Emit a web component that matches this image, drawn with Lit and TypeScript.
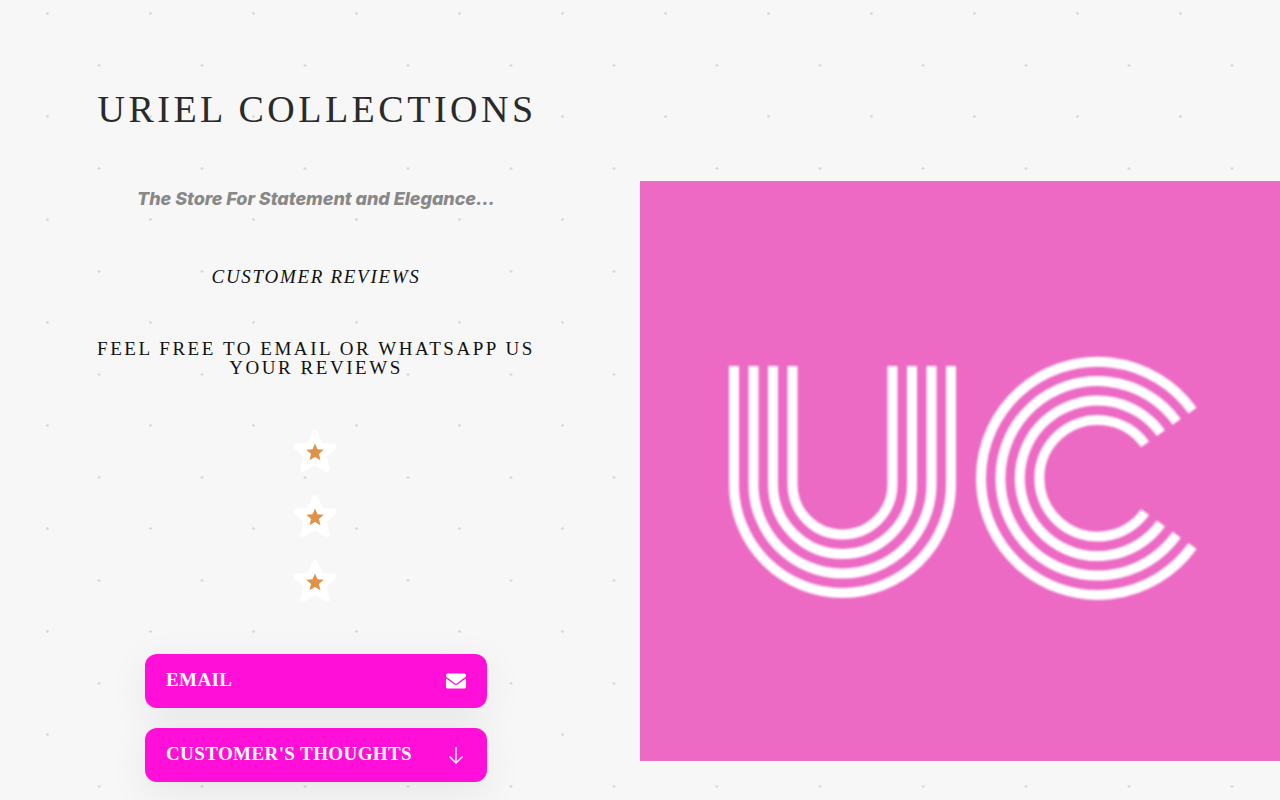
import { LitElement, css, html, svg } from "lit";
import { customElement } from "lit/decorators.js";

const U_RADII = [108.5, 89, 69.5, 50];
const C_RADII = [116.6, 97.2, 77.8, 58.3];
const C_ANGLE = (35.5 * Math.PI) / 180;

const ENVELOPE =
  "M502.3 190.8c3.9-3.1 9.7-.2 9.7 4.7V400c0 26.5-21.5 48-48 48H48c-26.5 0-48-21.5-48-48V195.6c0-5 5.7-7.8 9.7-4.7 22.4 17.4 52.1 39.5 154.1 113.6 21.1 15.4 56.7 47.8 92.2 47.6 35.7.3 72-32.8 92.3-47.6 102-74.1 131.6-96.3 154-113.7zM256 320c23.2.4 56.6-29.2 73.4-41.4 132.7-96.3 142.8-104.7 173.4-128.7 5.8-4.5 9.2-11.5 9.2-18.9v-19c0-26.5-21.5-48-48-48H48C21.5 64 0 85.5 0 112v19c0 7.4 3.4 14.3 9.2 18.9 30.6 23.9 40.7 32.4 173.4 128.7 16.8 12.2 50.2 41.8 73.4 41.4z";

const STAR =
  "M50 6 L63 36 L96 39 L71 61 L79 94 L50 77 L21 94 L29 61 L4 39 L37 36 Z";

@customElement("app-root")
export class AppRoot extends LitElement {
  static styles = css`
    :host {
      display: block;
      height: 800px;
      overflow: hidden;
      background-color: #f7f7f7;
      background-image: radial-gradient(circle, #d2d2d2 0.7px, transparent 1.7px),
        radial-gradient(circle, #d2d2d2 0.7px, transparent 1.7px);
      background-size: 103px 103px;
      background-position: -4px -38px, 47.5px 14px;
    }
    .page {
      display: grid;
      grid-template-columns: 640px 640px;
      height: 942px;
    }
    .left {
      display: flex;
      flex-direction: column;
      align-items: center;
      padding-right: 8px;
      text-align: center;
    }
    h1 {
      margin: 87px 0 0 2px;
      font: 400 38px/44px "Liberation Serif", serif;
      letter-spacing: 3.5px;
      color: #2a2a2a;
      white-space: nowrap;
    }
    .tagline {
      margin: 56px 0 0;
      font: italic 800 18px/24px Inter, sans-serif;
      letter-spacing: -0.05px;
      color: #888888;
    }
    .reviews {
      margin: 54px 0 0;
      font: italic 400 19px/24px "Liberation Serif", serif;
      letter-spacing: 1.7px;
      color: #111111;
    }
    .feel {
      margin: 50px 0 0;
      width: 450px;
      font: 400 19px/19px "Liberation Serif", serif;
      letter-spacing: 2.55px;
      color: #111111;
    }
    .stars {
      display: flex;
      flex-direction: column;
      gap: 23px;
      margin: 53px 2px 0 0;
    }
    .star {
      display: block;
      width: 42px;
      height: 42px;
    }
    .buttons {
      display: flex;
      flex-direction: column;
      gap: 20px;
      width: 342px;
      margin-top: 52px;
    }
    .btn {
      display: flex;
      align-items: center;
      justify-content: space-between;
      height: 54px;
      box-sizing: border-box;
      padding: 0 21px 0 22px;
      border-radius: 12px;
      background: #ff0fd8;
      box-shadow: 0 10px 40px rgba(0, 0, 0, 0.07);
      color: #ffffff;
      font: 700 19px/24px "Liberation Serif", serif;
      letter-spacing: 0.4px;
    }
    .btn span {
      margin-top: -2px;
      margin-left: -1px;
    }
    .btn svg {
      display: block;
    }
    .right {
      display: flex;
      align-items: center;
    }
    .logo {
      display: block;
      width: 640px;
      height: 580px;
      background: #ec6ac4;
    }
    .logo g {
      filter: blur(1px);
    }
  `;

  private star() {
    return html`<svg class="star" viewBox="0 0 100 100">
      <path d=${STAR} fill="#ffffff" stroke="#ffffff" stroke-width="12" stroke-linejoin="round"></path>
      <g transform="translate(50 52) scale(0.45) translate(-50 -50)">
        <path d=${STAR} fill="#e0924a"></path>
      </g>
    </svg>`;
  }

  // logo is in page coordinates minus the image's origin (640,181)
  private logo() {
    const ux = 202.5;
    const uy = 303.5;
    const cx = 457.6;
    const cy = 297.3;
    const us = U_RADII.map(
      (r) =>
        svg`<path d="M${ux - r} 185 V${uy} A${r} ${r} 0 0 0 ${ux + r} ${uy} V185"></path>`
    );
    const cs = C_RADII.map((r) => {
      const dx = r * Math.cos(C_ANGLE);
      const dy = r * Math.sin(C_ANGLE);
      return svg`<path d="M${cx + dx} ${cy - dy} A${r} ${r} 0 1 0 ${cx + dx} ${cy + dy}"></path>`;
    });
    return html`<svg class="logo" viewBox="0 0 640 580">
      <g fill="none" stroke="#ffffff" stroke-width="10">${us}${cs}</g>
    </svg>`;
  }

  render() {
    return html`<div class="page">
      <div class="left">
        <h1>URIEL COLLECTIONS</h1>
        <p class="tagline">The Store For Statement and Elegance...</p>
        <p class="reviews">CUSTOMER REVIEWS</p>
        <p class="feel">FEEL FREE TO EMAIL OR WHATSAPP US YOUR REVIEWS</p>
        <div class="stars">${this.star()}${this.star()}${this.star()}</div>
        <div class="buttons">
          <div class="btn">
            <span>EMAIL</span>
            <svg width="20" height="20" viewBox="0 0 512 512" fill="#fff"><path d=${ENVELOPE}></path></svg>
          </div>
          <div class="btn">
            <span>CUSTOMER'S THOUGHTS</span>
            <svg width="20" height="20" viewBox="0 0 20 20" fill="none" stroke="#fff" stroke-width="1.4">
              <path d="M10 2 V18 M3.5 11.5 L10 18 L16.5 11.5"></path>
            </svg>
          </div>
        </div>
      </div>
      <div class="right">${this.logo()}</div>
    </div>`;
  }
}
